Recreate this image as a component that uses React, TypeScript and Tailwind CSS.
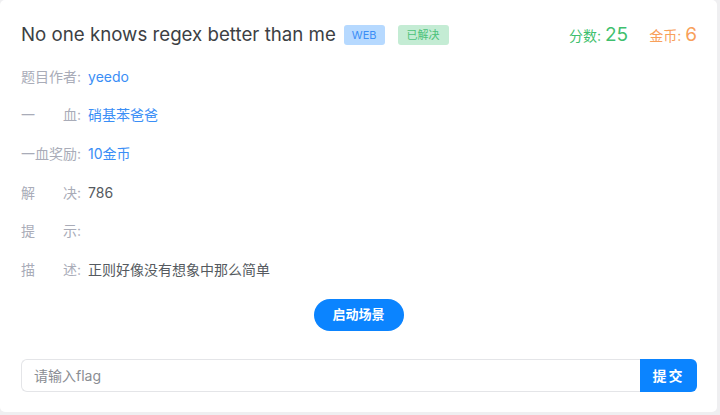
import React from "react";

const rows: { label: string[]; value: string; color: string }[] = [
  { label: ["题", "目", "作", "者"], value: "yeedo", color: "text-[#3a8ef6]" },
  { label: ["一", "血"], value: "硝基苯爸爸", color: "text-[#3a8ef6]" },
  { label: ["一", "血", "奖", "励"], value: "10金币", color: "text-[#3a8ef6]" },
  { label: ["解", "决"], value: "786", color: "text-[#555a60]" },
  { label: ["提", "示"], value: "", color: "text-[#555a60]" },
  { label: ["描", "述"], value: "正则好像没有想象中那么简单", color: "text-[#555a60]" },
];

export default function App() {
  return (
    <div
      className="w-[720px] h-[415px] bg-[#efeff1] overflow-hidden"
      style={{ fontFamily: "Inter, 'Noto Sans CJK SC', sans-serif" }}
    >
      <div className="w-[717px] h-[412px] bg-white rounded-[5px] flex flex-col px-[21px] pt-[22px]">
        <div className="flex items-center h-[26px]">
          <div className="text-[18.7px] text-[#3d3f44] leading-none">No one knows regex better than me</div>
          <span className="ml-[8px] h-[20px] px-[8px] rounded-[3px] bg-[#b6d9ff] text-[#3a8ef6] text-[11px] flex items-center">WEB</span>
          <span className="ml-[13px] h-[20px] px-[9px] rounded-[3px] bg-[#c4ecd4] text-[#4cc27a] text-[11px] flex items-center">已解决</span>
          <div className="ml-auto flex items-baseline mr-[-1px]">
            <span className="text-[14px] text-[#3fbf6e]">分数:</span>
            <span className="text-[19px] text-[#3fbf6e] ml-[4px]">25</span>
            <span className="text-[14px] text-[#f8a05a] ml-[21px]">金币:</span>
            <span className="text-[19px] text-[#f8a05a] ml-[4px]">6</span>
          </div>
        </div>
        <div className="flex flex-col mt-[9px]">
          {rows.map((r, i) => (
            <div key={i} className="flex items-center h-[38.6px] text-[14px]">
              <span className="w-[56px] flex justify-between text-[#a9acb8]">
                {r.label.map((c, j) => (
                  <span key={j}>{c}</span>
                ))}
              </span>
              <span className="text-[#a9acb8]">:</span>
              <span className={`ml-[7px] ${r.color}`}>{r.value}</span>
            </div>
          ))}
        </div>
        <div className="flex justify-center mt-[10px]">
          <button className="w-[90px] h-[32px] rounded-full bg-[#0b84ff] text-white text-[13px] font-bold">
            启动场景
          </button>
        </div>
        <div className="flex mt-[28px] w-[676px] h-[33px]">
          <div className="flex-1 border border-[#e4e5e8] border-r-0 rounded-l-[6px] flex items-center pl-[12px] text-[14px] text-[#8a8d93]">
            请输入flag
          </div>
          <button className="w-[57px] h-[33px] bg-[#0b84ff] rounded-r-[6px] text-white text-[14px] font-bold tracking-[2px]">
            提交
          </button>
        </div>
      </div>
    </div>
  );
}
